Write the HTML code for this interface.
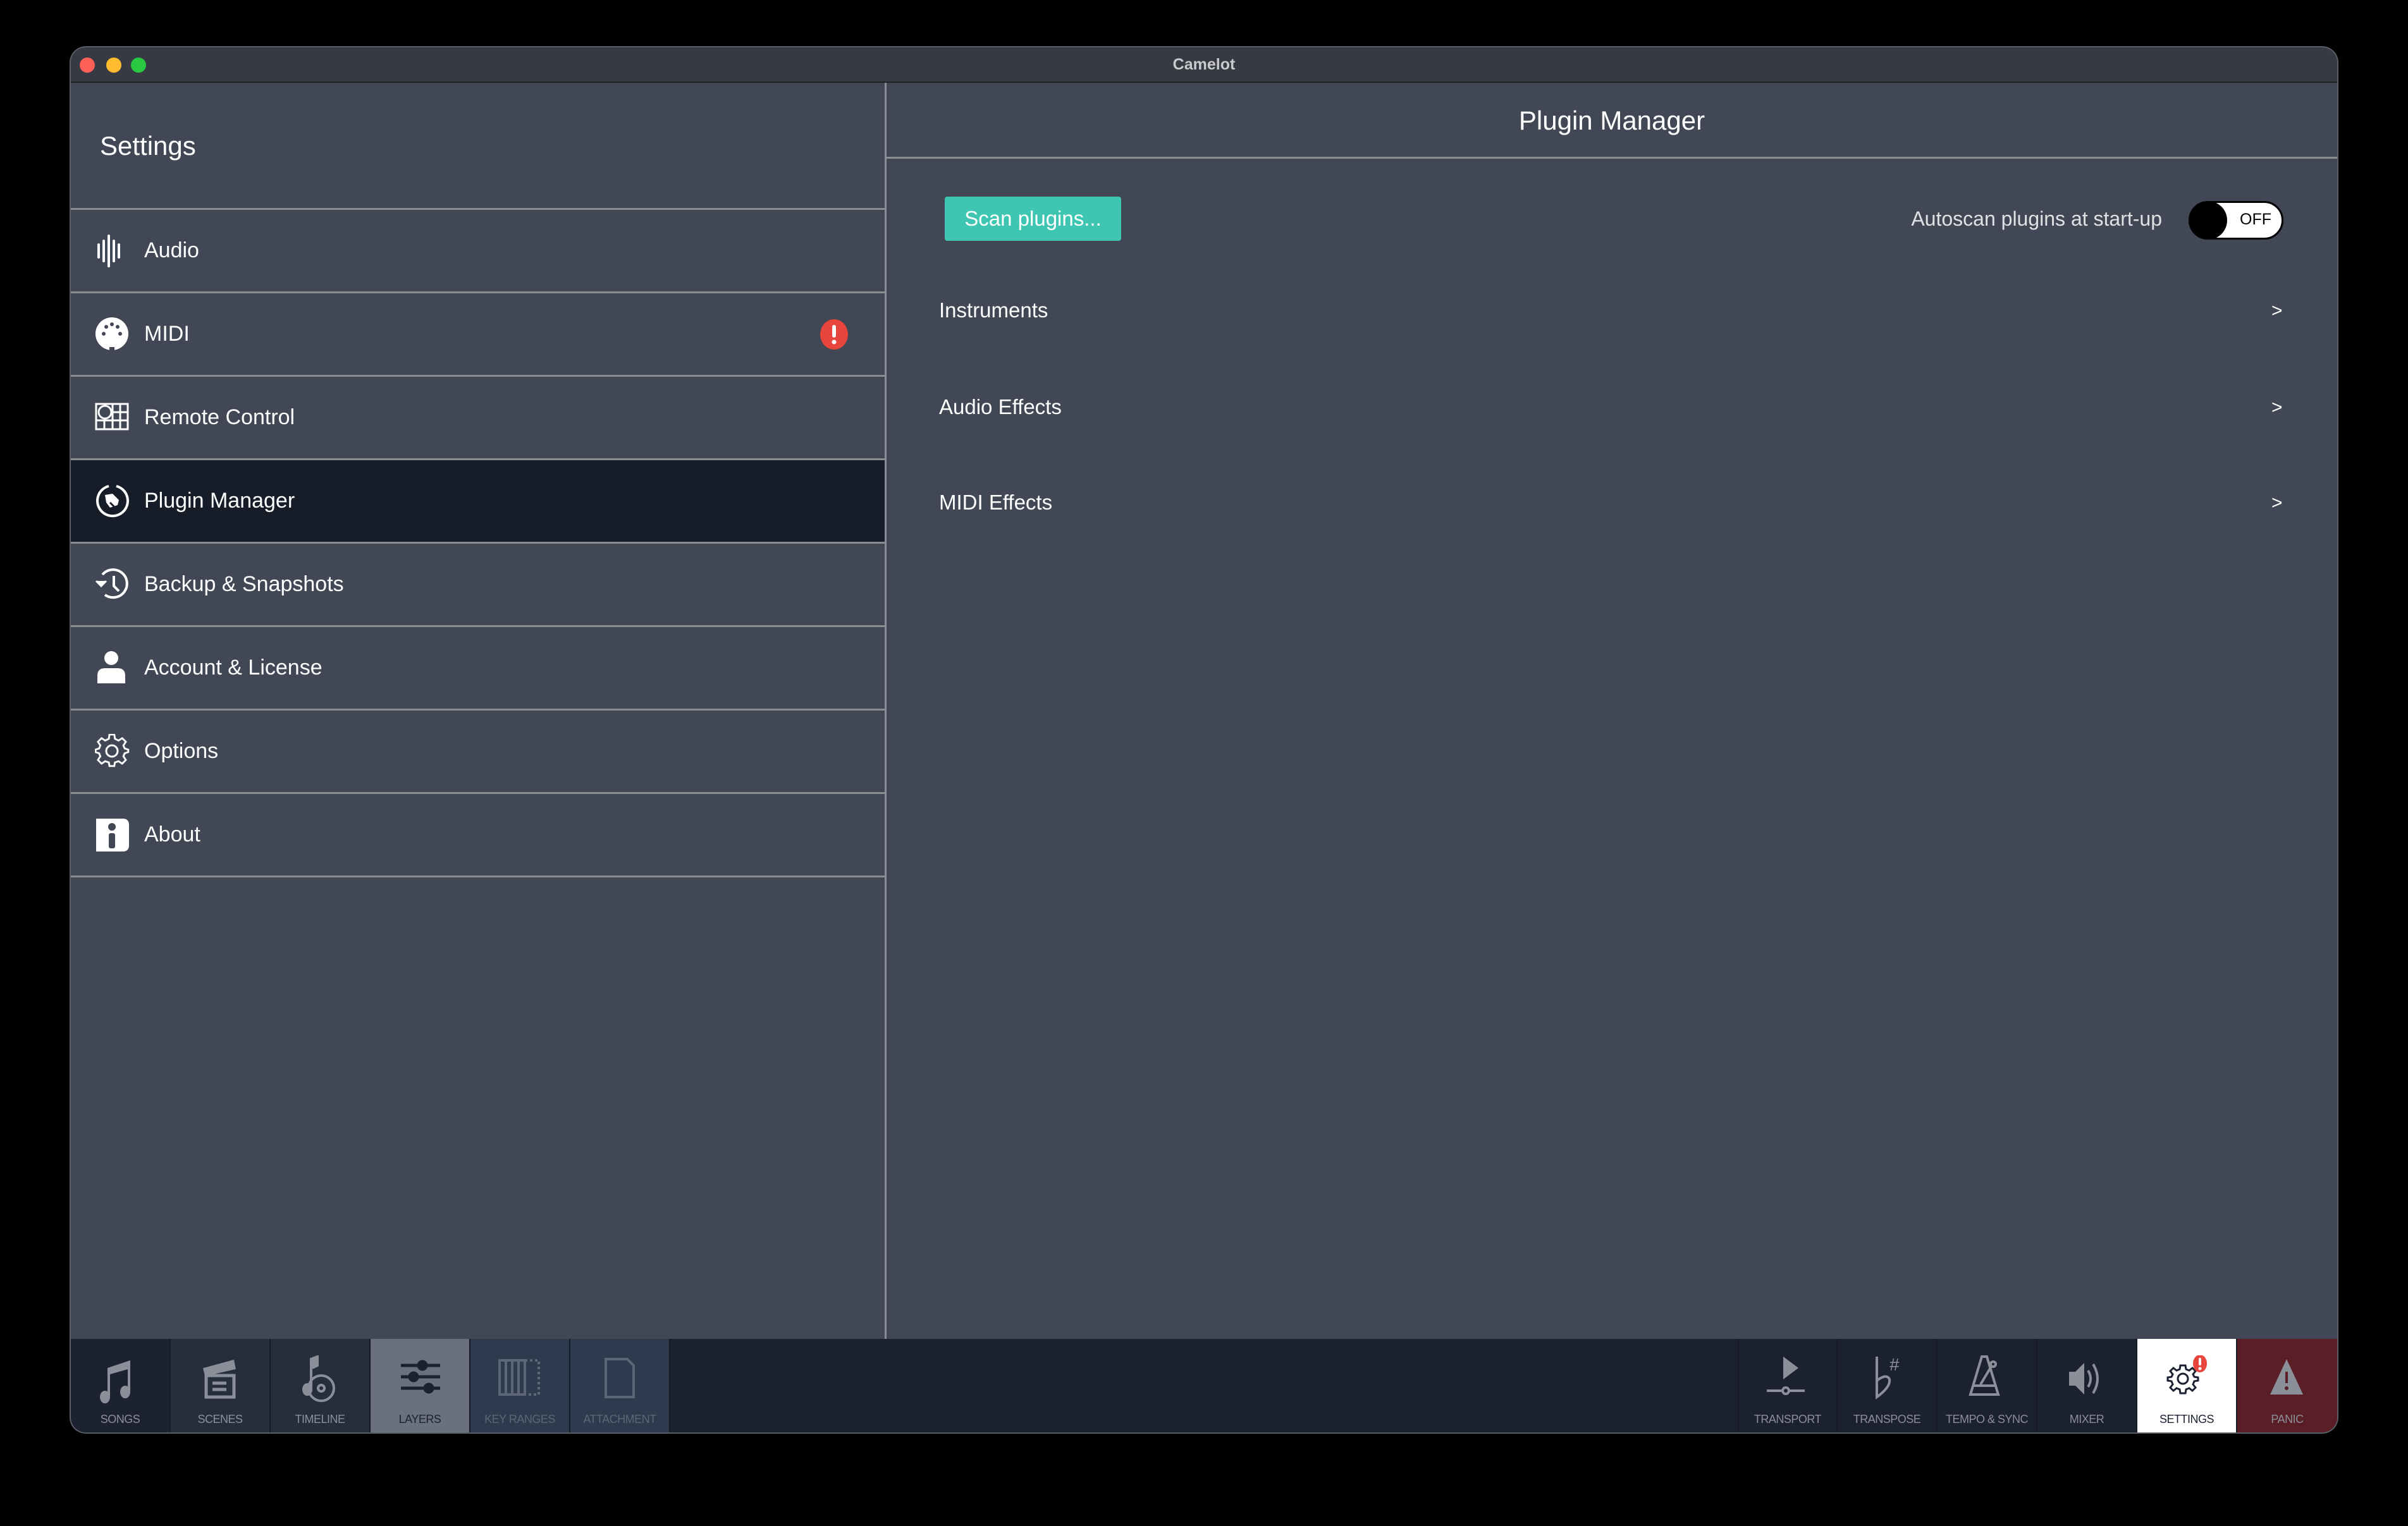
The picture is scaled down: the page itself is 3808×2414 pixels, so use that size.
<!DOCTYPE html>
<html><head><meta charset="utf-8"><style>
*{margin:0;padding:0;box-sizing:border-box}
body{width:3808px;height:2414px;background:#000;position:relative;overflow:hidden;font-family:"Liberation Sans",sans-serif;color:#fff}
.abs{position:absolute}
.win{left:112px;top:75px;width:3584px;height:2191px;border-radius:24px;overflow:hidden;background:#414754;box-shadow:0 0 0 2px #5a5e66}
.title{left:0;top:0;width:100%;height:56px;background:#373a43;border-bottom:2px solid #1e2026}
.dot{width:24px;height:24px;border-radius:50%;top:16px}
.line{height:3px;background:#8a8d93}
.item{left:0;width:1287px;height:129px}
.item .lbl{position:absolute;left:116px;top:0;line-height:129px;font-size:34px}
.item svg{position:absolute;left:38px;top:37px}
.tab{top:2043px;width:158px;height:148px;border-right:2px solid #161b25}
.tab span{position:absolute;left:0;right:0;bottom:10px;text-align:center;font-size:18px;color:#8a8f99;letter-spacing:-0.5px}
.tab svg{position:absolute;left:44px;top:26px}
</style></head><body>
<div class="abs win">
 <div class="abs title">
  <div class="abs dot" style="left:14px;background:#fe5f57"></div>
  <div class="abs dot" style="left:56px;background:#febc2e"></div>
  <div class="abs dot" style="left:95px;background:#28c840"></div>
  <div class="abs" style="left:0;width:100%;top:13px;text-align:center;font-size:25px;font-weight:bold;color:#c9cacd">Camelot</div>
 </div>
 <div class="abs" style="left:1287px;top:56px;width:3px;height:1987px;background:#8a8d93"></div>
 <div class="abs" style="left:46px;top:132px;font-size:42px">Settings</div>
 <div class="abs line" style="left:0;top:254px;width:1287px"></div>

 <div class="abs item" style="top:257px">
  <svg width="56" height="56" viewBox="0 0 56 56" fill="#fff"><rect x="4" y="16" width="4" height="24" rx="2"/><rect x="12" y="10" width="4" height="36" rx="2"/><rect x="20" y="2" width="4" height="52" rx="2"/><rect x="28" y="10" width="4" height="36" rx="2"/><rect x="36" y="16" width="4" height="24" rx="2"/></svg>
  <div class="lbl">Audio</div></div>
 <div class="abs line" style="left:0;top:386px;width:1287px"></div>
 <div class="abs item" style="top:389px">
  <svg width="56" height="56" viewBox="0 0 56 56"><circle cx="27" cy="27" r="26" fill="#fff"/><g fill="#414754"><circle cx="14" cy="27" r="3"/><circle cx="40" cy="27" r="3"/><circle cx="18" cy="16" r="3"/><circle cx="36" cy="16" r="3"/><circle cx="27" cy="12" r="3"/><rect x="23" y="48" width="8" height="8"/></g></svg>
  <div class="lbl">MIDI</div>
  <svg style="left:1184px;top:40px" width="46" height="50" viewBox="0 0 46 50"><ellipse cx="23" cy="25" rx="22" ry="24" fill="#e8453c"/><rect x="20" y="10" width="6" height="20" rx="3" fill="#fff"/><circle cx="23" cy="37" r="3.5" fill="#fff"/></svg></div>
 <div class="abs line" style="left:0;top:518px;width:1287px"></div>
 <div class="abs item" style="top:521px">
  <svg width="56" height="56" viewBox="0 0 56 56" fill="none" stroke="#fff" stroke-width="3"><rect x="2" y="6" width="50" height="40"/><circle cx="16" cy="19" r="10"/><path d="M28 6V46M40 6V46M28 19H52M28 32H52M2 32H28M15 32V46"/></svg>
  <div class="lbl">Remote Control</div></div>
 <div class="abs line" style="left:0;top:650px;width:1287px"></div>
 <div class="abs item" style="top:653px;background:#161c28">
  <svg width="56" height="56" viewBox="0 0 56 56" fill="none" stroke="#fff" stroke-width="4"><path d="M22 4A24 24 0 1 0 34 4"/><path d="M16 18L28 16L38 26L36 34L24 38L18 30Z" fill="#fff" stroke="none"/><path d="M24 30L34 40" stroke="#161c28" stroke-width="3"/></svg>
  <div class="lbl">Plugin Manager</div></div>
 <div class="abs line" style="left:0;top:782px;width:1287px"></div>
 <div class="abs item" style="top:785px">
  <svg width="56" height="56" viewBox="0 0 56 56" fill="none" stroke="#fff" stroke-width="4"><path d="M12 12A22 22 0 1 1 16 44"/><path d="M2 22L10 30L18 22" fill="#fff" stroke-width="3"/><path d="M30 14V30L38 38"/></svg>
  <div class="lbl">Backup &amp; Snapshots</div></div>
 <div class="abs line" style="left:0;top:914px;width:1287px"></div>
 <div class="abs item" style="top:917px">
  <svg width="56" height="56" viewBox="0 0 56 56" fill="#fff"><circle cx="26" cy="12" r="11"/><path d="M4 40Q4 28 16 28H36Q48 28 48 40V52H4Z"/></svg>
  <div class="lbl">Account &amp; License</div></div>
 <div class="abs line" style="left:0;top:1046px;width:1287px"></div>
 <div class="abs item" style="top:1049px">
  <svg width="56" height="56" viewBox="0 0 56 56" fill="none" stroke="#fff" stroke-width="3"><circle cx="27" cy="27" r="9"/><path d="M23 2H31L32 9L38 12L44 8L50 14L46 20L48 25L54 27V31L48 33L46 38L50 44L44 50L38 46L32 48L31 54H23L22 48L16 46L10 50L4 44L8 38L6 33L0 31V27L6 25L8 20L4 14L10 8L16 12L22 9Z" transform="translate(1 -1) scale(.96)"/></svg>
  <div class="lbl">Options</div></div>
 <div class="abs line" style="left:0;top:1178px;width:1287px"></div>
 <div class="abs item" style="top:1181px">
  <svg width="56" height="56" viewBox="0 0 56 56"><path d="M2 2H44Q54 2 54 12V44Q54 54 44 54H2Z" fill="#fff"/><circle cx="27" cy="15" r="6" fill="#414754"/><rect x="22" y="25" width="10" height="24" rx="3" fill="#414754"/></svg>
  <div class="lbl">About</div></div>
 <div class="abs line" style="left:0;top:1310px;width:1287px"></div>

 <div class="abs" style="left:1290px;width:2294px;top:92px;text-align:center;font-size:42px">Plugin Manager</div>
 <div class="abs line" style="left:1290px;top:173px;width:2294px"></div>
 <div class="abs" style="left:1382px;top:236px;width:279px;height:70px;background:#3fc6b2;border-radius:4px;text-align:center;line-height:70px;font-size:33px">Scan plugins...</div>
 <div class="abs" style="left:2700px;width:607px;top:253px;text-align:right;font-size:32px;color:#e0e1e4">Autoscan plugins at start-up</div>
 <div class="abs" style="left:3349px;top:243px;width:150px;height:61px;border-radius:31px;background:#fff;border:3px solid #000"></div>
 <div class="abs" style="left:3349px;top:243px;width:61px;height:61px;border-radius:50%;background:#000"></div>
 <div class="abs" style="left:3430px;top:258px;font-size:25px;color:#000">OFF</div>
 <div class="abs" style="left:1373px;top:397px;font-size:33px">Instruments</div>
 <div class="abs" style="left:1373px;top:550px;font-size:33px">Audio Effects</div>
 <div class="abs" style="left:1373px;top:701px;font-size:33px">MIDI Effects</div>
 <div class="abs" style="left:3480px;top:400px;font-size:30px">&gt;</div>
 <div class="abs" style="left:3480px;top:553px;font-size:30px">&gt;</div>
 <div class="abs" style="left:3480px;top:704px;font-size:30px">&gt;</div>

 <div class="abs" style="left:0;top:2043px;width:100%;height:148px;background:#1b2130"></div>
 <div class="abs tab" style="left:0;background:#1c2230"><svg width="70" height="80" viewBox="0 0 70 80" fill="#8a8f99"><path d="M14 20L50 8V56H46V22L18 30V64H14Z"/><ellipse cx="10" cy="66" rx="8" ry="10"/><ellipse cx="42" cy="58" rx="8" ry="10"/></svg><span>SONGS</span></div>
 <div class="abs tab" style="left:158px;background:#262d3d"><svg width="70" height="80" viewBox="0 0 70 80" fill="none" stroke="#8a8f99" stroke-width="5"><rect x="12" y="32" width="44" height="34"/><path d="M22 44H44M22 54H44"/><path d="M10 22L54 10L56 20L12 30Z" fill="#8a8f99"/></svg><span>SCENES</span></div>
 <div class="abs tab" style="left:316px;background:#262d3d"><svg width="70" height="80" viewBox="0 0 70 80" fill="none" stroke="#8a8f99" stroke-width="4"><circle cx="36" cy="52" r="20"/><circle cx="36" cy="52" r="5"/><path d="M20 52V6L30 2V16L22 20" fill="#8a8f99"/><ellipse cx="14" cy="54" rx="6" ry="8" fill="#8a8f99"/></svg><span>TIMELINE</span></div>
 <div class="abs tab" style="left:474px;background:#6b717c"><svg width="70" height="80" viewBox="0 0 70 80" fill="#1b2130" stroke="#1b2130" stroke-width="5"><path d="M4 16H66M4 34H66M4 52H66"/><circle cx="38" cy="16" r="6"/><circle cx="24" cy="34" r="6"/><circle cx="48" cy="52" r="6"/></svg><span style="color:#1b2130">LAYERS</span></div>
 <div class="abs tab" style="left:632px;background:#2e3a4d"><svg width="70" height="80" viewBox="0 0 70 80" fill="none" stroke="#5d6677" stroke-width="4"><rect x="2" y="8" width="40" height="54"/><path d="M12 8V62M22 8V62M32 8V62"/><path d="M42 8H64V62H42" stroke-dasharray="4 4"/></svg><span style="color:#5d6677">KEY RANGES</span></div>
 <div class="abs tab" style="left:790px;background:#2e3a4d"><svg width="70" height="80" viewBox="0 0 70 80" fill="none" stroke="#5d6677" stroke-width="4"><path d="M12 6H46L56 16V66H12Z"/></svg><span style="color:#5d6677">ATTACHMENT</span></div>

 <div class="abs tab" style="left:2636px;border-left:2px solid #161b25"><svg width="70" height="80" viewBox="0 0 70 80" fill="#8a8f99" stroke="#8a8f99" stroke-width="4"><path d="M26 2L50 20L26 38Z" stroke="none"/><path d="M0 56H24M36 56H60"/><circle cx="30" cy="56" r="5" fill="none"/></svg><span>TRANSPORT</span></div>
 <div class="abs tab" style="left:2794px"><svg width="70" height="80" viewBox="0 0 70 80" fill="none" stroke="#8a8f99" stroke-width="4"><path d="M18 2V66Q40 50 38 38Q34 28 18 40"/><text x="38" y="24" font-size="28" fill="#8a8f99" stroke="none" font-family="Liberation Sans">#</text></svg><span>TRANSPOSE</span></div>
 <div class="abs tab" style="left:2952px"><svg width="70" height="80" viewBox="0 0 70 80" fill="none" stroke="#8a8f99" stroke-width="4"><path d="M26 2H34L52 62H8Z"/><path d="M12 48H48M24 46L42 16"/><circle cx="44" cy="14" r="4"/></svg><span>TEMPO &amp; SYNC</span></div>
 <div class="abs tab" style="left:3110px"><svg width="70" height="80" viewBox="0 0 70 80" fill="#8a8f99" stroke="#8a8f99" stroke-width="4"><path d="M6 26H16L30 12V62L16 48H6Z" stroke="none"/><path d="M36 24Q44 37 36 50M44 14Q58 37 44 60" fill="none"/></svg><span>MIXER</span></div>
 <div class="abs tab" style="left:3268px;background:#fff"><svg width="80" height="80" viewBox="0 0 80 80" fill="none" stroke="#1b2130" stroke-width="3"><circle cx="28" cy="37" r="8"/><path d="M24 16H32L33 22L38 24L43 20L48 25L44 30L46 34L52 35V40L46 41L44 46L48 51L43 56L38 52L33 54L32 60H24L23 54L18 52L13 56L8 51L12 46L10 41L4 40V35L10 34L12 30L8 25L13 20L18 24L23 22Z"/><ellipse cx="55" cy="13" rx="11" ry="14" fill="#e8453c" stroke="none"/><rect x="53" y="4" width="4" height="12" rx="2" fill="#fff" stroke="none"/><circle cx="55" cy="21" r="2.5" fill="#fff" stroke="none"/></svg><span style="color:#1b2130">SETTINGS</span></div>
 <div class="abs tab" style="left:3426px;background:#5a1e26;border-right:none"><svg width="70" height="80" viewBox="0 0 70 80"><path d="M34 6L60 62H8Z" fill="#8a8f99"/><rect x="32" y="26" width="4" height="18" fill="#5a1e26"/><circle cx="34" cy="52" r="3" fill="#5a1e26"/></svg><span>PANIC</span></div>
</div>
</body></html>
